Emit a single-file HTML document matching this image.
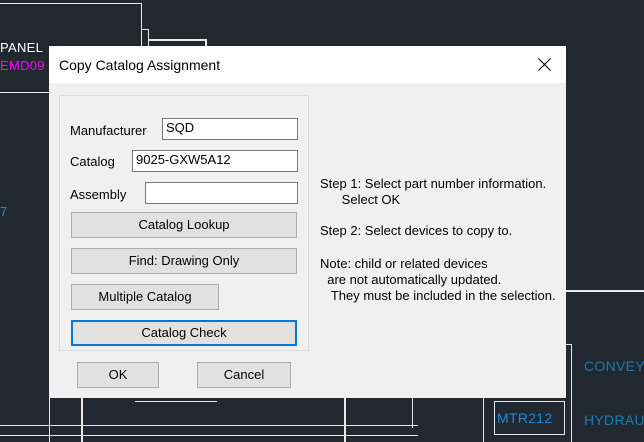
<!DOCTYPE html>
<html><head><style>
body{margin:0;width:644px;height:442px;background:#212830;position:relative;overflow:hidden;font-family:"Liberation Sans",sans-serif;}
.a{position:absolute;}
.l{position:absolute;background:#e8e8e8;}
.cad{position:absolute;font-size:13px;letter-spacing:0.3px;}
.dlg{position:absolute;left:49px;top:46px;width:517px;height:352px;background:#f0f0f0;}
.tb{position:absolute;left:0;top:0;width:517px;height:37px;background:#fff;}
.t{font-size:13px;color:#000;position:absolute;}
.in{position:absolute;background:#fff;border:1px solid #7a7a7a;height:22px;box-sizing:border-box;font-size:13px;padding:1px 3px;}
.btn{position:absolute;background:#e1e1e1;border:1px solid #adadad;box-sizing:border-box;font-size:13px;text-align:center;line-height:22px;}
</style></head><body>
<div class="l" style="left:0;top:3px;width:142px;height:1px"></div>
<div class="l" style="left:141px;top:3px;width:1px;height:90px"></div>
<div class="l" style="left:0;top:92px;width:142px;height:1px"></div>
<div class="l" style="left:141px;top:29px;width:8px;height:1px"></div>
<div class="l" style="left:148px;top:29px;width:1px;height:20px"></div>
<div class="l" style="left:149px;top:39px;width:57px;height:2px"></div>
<div class="l" style="left:205px;top:39px;width:2px;height:10px"></div>
<div class="cad" style="left:0;top:40px;color:#fff">PANEL</div>
<div class="cad" style="left:0;top:58px;color:#f0f">EMD09</div>
<div class="cad" style="left:0;top:204px;color:#1a8ae0">7</div>
<div class="l" style="left:566px;top:290px;width:78px;height:2px"></div>
<div class="l" style="left:49px;top:398px;width:1px;height:44px"></div>
<div class="l" style="left:81px;top:398px;width:2px;height:44px"></div>
<div class="l" style="left:344px;top:398px;width:2px;height:44px"></div>
<div class="l" style="left:483px;top:398px;width:1px;height:44px"></div>
<div class="l" style="left:571px;top:344px;width:1px;height:98px"></div>
<div class="l" style="left:566px;top:344px;width:6px;height:1px"></div>
<div class="l" style="left:0;top:425px;width:418px;height:1px"></div>
<div class="l" style="left:0;top:435px;width:418px;height:1px"></div>
<div class="l" style="left:412px;top:398px;width:1px;height:30px"></div>
<div class="l" style="left:135px;top:401px;width:82px;height:1px"></div>
<div class="a" style="left:494px;top:401px;width:69px;height:32px;border:1px solid #e8e8e8"></div>
<div class="cad" style="left:497px;top:410px;color:#1a8ae0;font-size:14px">MTR212</div>
<div class="cad" style="left:584px;top:358px;color:#1a7ab8;font-size:14px">CONVEY</div>
<div class="cad" style="left:584px;top:412px;color:#1a7ab8;font-size:14px">HYDRAU</div>

<div class="dlg">
<div class="tb"></div>
<div class="t" style="left:10px;top:11px;font-size:14px">Copy Catalog Assignment</div>
<svg class="a" style="left:489px;top:12px" width="13" height="13"><path d="M0.5 0.5L12.5 12.5M12.5 0.5L0.5 12.5" stroke="#000" stroke-width="1.1"/></svg>
<div class="a" style="left:10px;top:49px;width:250px;height:256px;border:1px solid #dcdcdc;box-sizing:border-box"></div>
<div class="t" style="left:21px;top:77px">Manufacturer</div>
<div class="in" style="left:113px;top:72px;width:136px">SQD</div>
<div class="t" style="left:21px;top:108px">Catalog</div>
<div class="in" style="left:83px;top:104px;width:166px">9025-GXW5A12</div>
<div class="t" style="left:21px;top:141px">Assembly</div>
<div class="in" style="left:96px;top:136px;width:153px"></div>
<div class="btn" style="left:22px;top:166px;width:226px;height:26px;line-height:24px">Catalog Lookup</div>
<div class="btn" style="left:22px;top:202px;width:226px;height:26px;line-height:24px">Find: Drawing Only</div>
<div class="btn" style="left:22px;top:238px;width:148px;height:26px;line-height:24px">Multiple Catalog</div>
<div class="btn" style="left:22px;top:274px;width:226px;height:26px;line-height:22px;border:2px solid #0078d7">Catalog Check</div>
<div class="btn" style="left:28px;top:316px;width:82px;height:26px;line-height:24px">OK</div>
<div class="btn" style="left:148px;top:316px;width:94px;height:26px;line-height:24px">Cancel</div>
<div class="t" style="left:271px;top:130px;line-height:16px">Step 1: Select part number information.<br>&nbsp;&nbsp;&nbsp;&nbsp;&nbsp;&nbsp;Select OK</div>
<div class="t" style="left:271px;top:177px">Step 2: Select devices to copy to.</div>
<div class="t" style="left:271px;top:210px;line-height:16px">Note: child or related devices<br>&nbsp;&nbsp;are not automatically updated.<br>&nbsp;&nbsp;&nbsp;They must be included in the selection.</div>
</div>
</body></html>
